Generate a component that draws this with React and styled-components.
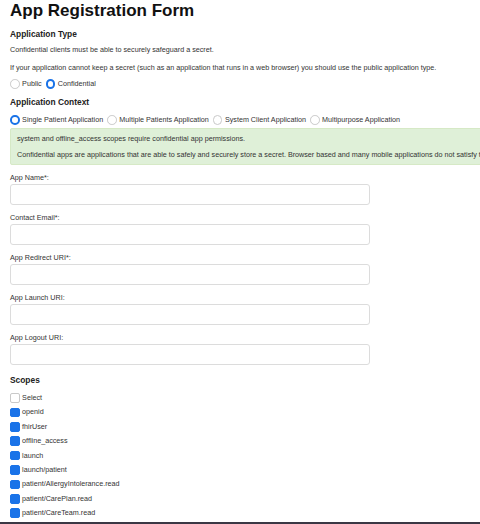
import styled, { createGlobalStyle } from "styled-components";

const GlobalStyle = createGlobalStyle`
    html, body {
        margin: 0;
        padding: 0;
        background: #ffffff;
        overflow-x: hidden;
    }
    body {
        font-family: "Liberation Sans", Arial, sans-serif;
        color: #333333;
    }
`;

const contexts = [
    { label: "Single Patient Application", checked: true },
    { label: "Multiple Patients Application" },
    { label: "System Client Application" },
    { label: "Multipurpose Application" },
];

const fields = [
    "App Name*:",
    "Contact Email*:",
    "App Redirect URI*:",
    "App Launch URI:",
    "App Logout URI:",
];

const scopes = [
    "openid",
    "fhirUser",
    "offline_access",
    "launch",
    "launch/patient",
    "patient/AllergyIntolerance.read",
    "patient/CarePlan.read",
    "patient/CareTeam.read",
];

function App() {
    return (
        <>
            <GlobalStyle />
            <Page>
                <Title>App Registration Form</Title>

                <SectionTitle>Application Type</SectionTitle>
                <Para>Confidential clients must be able to securely safeguard a secret.</Para>
                <Para $gap={6}>
                    If your application cannot keep a secret (such as an application that runs in a web
                    browser) you should use the public application type.
                </Para>
                <RadioRow $gap={4}>
                    <Choice>
                        <Radio />
                        Public
                    </Choice>
                    <Choice>
                        <Radio $checked />
                        Confidential
                    </Choice>
                </RadioRow>

                <SectionTitle>Application Context</SectionTitle>
                <RadioRow $gap={5}>
                    {contexts.map((c) => (
                        <Choice key={c.label}>
                            <Radio $checked={c.checked} />
                            {c.label}
                        </Choice>
                    ))}
                </RadioRow>
                <Notice>
                    <div>system and offline_access scopes require confidential app permissions.</div>
                    <div>
                        Confidential apps are applications that are able to safely and securely store a
                        secret. Browser based and many mobile applications do not satisfy this requirement.
                    </div>
                </Notice>

                {fields.map((f) => (
                    <Field key={f}>
                        <Label>{f}</Label>
                        <Input type="text" />
                    </Field>
                ))}

                <SectionTitle $gap={8}>Scopes</SectionTitle>
                <ScopeList>
                    <Choice>
                        <Check />
                        Select
                    </Choice>
                    {scopes.map((s) => (
                        <Choice key={s}>
                            <Check $checked />
                            {s}
                        </Choice>
                    ))}
                </ScopeList>
            </Page>
            <ScrollEdge />
        </>
    );
}
export default App;

const Page = styled.div`
    padding: 0 10px 8px;
    display: flex;
    flex-direction: column;
    font-size: 7.2px;
`;

const Title = styled.h1`
    margin: 0;
    font-size: 17px;
    line-height: 22px;
    font-weight: 700;
    color: #111111;
`;

const SectionTitle = styled.h2`
    margin: ${(p) => p.$gap ?? 5}px 0 0;
    font-size: 8.4px;
    line-height: 14px;
    font-weight: 700;
    color: #222222;
`;

const Para = styled.p`
    margin: ${(p) => p.$gap ?? 3}px 0 0;
    line-height: 12px;
    white-space: nowrap;
`;

const RadioRow = styled.div`
    margin-top: ${(p) => p.$gap}px;
    display: flex;
    align-items: center;
    gap: 4px;
    height: 12px;
    white-space: nowrap;
`;

const Choice = styled.label`
    display: flex;
    align-items: center;
    gap: 2.5px;
    line-height: 12px;
    white-space: nowrap;
`;

const Radio = styled.span`
    box-sizing: border-box;
    width: 9.6px;
    height: 9.6px;
    border-radius: 50%;
    border: ${(p) => (p.$checked ? "2.8px solid #1a73e8" : "1px solid #c9c9c9")};
    background: #ffffff;
    flex-shrink: 0;
`;

const Check = styled.span`
    box-sizing: border-box;
    width: 9.6px;
    height: 9.6px;
    border-radius: 2px;
    border: 1px solid ${(p) => (p.$checked ? "#1a73e8" : "#c9c9c9")};
    background: ${(p) => (p.$checked ? "#1a73e8" : "#ffffff")};
    flex-shrink: 0;
`;

const Notice = styled.div`
    box-sizing: border-box;
    margin-top: 2px;
    width: 640px;
    height: 37px;
    padding: 4px 6px 3px;
    display: flex;
    flex-direction: column;
    gap: 4px;
    background: #dff0d8;
    border: 1px solid #d6e9c6;
    border-radius: 2px;
    line-height: 12px;
    color: #333333;
    white-space: nowrap;
`;

const Field = styled.div`
    margin-top: 7px;
    display: flex;
    flex-direction: column;
`;

const Label = styled.label`
    line-height: 12px;
`;

const Input = styled.input`
    box-sizing: border-box;
    width: 360px;
    height: 21px;
    margin: 0;
    border: 1px solid #dcdcdc;
    border-radius: 3px;
    background: #ffffff;
    outline: none;
`;

const ScopeList = styled.div`
    margin-top: 5px;
    display: flex;
    flex-direction: column;
    gap: 2.4px;
`;

const ScrollEdge = styled.div`
    position: fixed;
    left: 0;
    right: 0;
    bottom: 0;
    height: 2px;
    background: #3b3744;
`;
